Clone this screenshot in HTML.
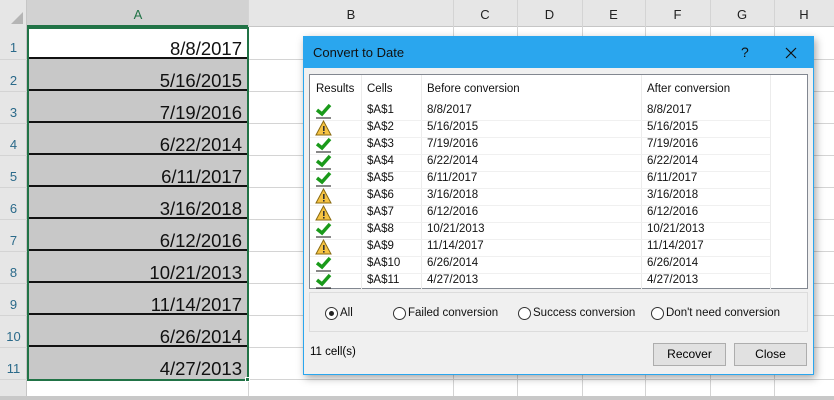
<!DOCTYPE html>
<html><head><meta charset="utf-8"><style>
*{margin:0;padding:0;box-sizing:border-box}
body{width:834px;height:400px;overflow:hidden;background:#fff;font-family:"Liberation Sans",sans-serif;position:relative}
.abs{position:absolute}
.hdr{background:#e6e6e6}
.vl{position:absolute;top:0;width:1px;height:396px;background:#d4d4d4}
.hl{position:absolute;left:0;height:1px;width:834px;background:#d4d4d4}
.colh{position:absolute;top:0;height:27px;line-height:30px;text-align:center;font-size:13px;color:#222}
.rown{position:absolute;left:0;width:27px;text-align:center;font-size:13px;color:#2b6a8a}
.cell{position:absolute;left:29px;width:218px;height:32px;overflow:hidden;background:#c8c8c8;border-bottom:2px solid #111;text-align:right;padding-right:5px;font-size:18.5px;line-height:44px;color:#111}
.dlg{position:absolute;left:303px;top:36px;width:511px;height:339px;background:#f0f0f0;border:1px solid #2aa6ee;box-shadow:2px 3px 8px rgba(0,0,0,.35)}
.tb{position:absolute;left:0;top:0;width:509px;height:31px;background:#2aa6ee;font-size:13px;line-height:31px;padding-left:9px;color:#111}
.list{position:absolute;left:5px;top:37px;width:499px;height:215px;background:#fff;border:1px solid #828790}
.r{position:absolute;font-size:11.5px;color:#111;white-space:nowrap}
.rl{position:absolute;left:0;width:460px;height:1px;background:#f0f0f0}
.cs{position:absolute;top:0;width:1px;height:215px;background:#ececec}
.btn{position:absolute;top:306px;height:23px;background:#e1e1e1;border:1px solid #adadad;font-size:12px;text-align:center;line-height:21px}
.rad{position:absolute;top:270px;width:13px;height:13px;border:1px solid #333;border-radius:50%;background:#fff}
.rt{position:absolute;top:270px;font-size:11.5px;color:#111}
</style></head><body>
<div class="abs hdr" style="left:0;top:0;width:834px;height:27px;border-bottom:1px solid #c6c6c6"></div>
<div class="abs hdr" style="left:0;top:0;width:27px;height:396px;border-right:1px solid #c6c6c6"></div>
<div class="abs" style="left:27px;top:0;width:222px;height:27px;background:#d2d2d2;border-bottom:2px solid #217346"></div>
<svg class="abs" style="left:10px;top:12px" width="14" height="13"><polygon points="13,0 13,12 1,12" fill="#b5b5b5"/></svg>
<div class="vl" style="left:248px"></div><div class="vl" style="left:453px"></div><div class="vl" style="left:517px"></div><div class="vl" style="left:582px"></div><div class="vl" style="left:645px"></div><div class="vl" style="left:710px"></div><div class="vl" style="left:774px"></div>
<div class="hl" style="top:59px"></div><div class="hl" style="top:91px"></div><div class="hl" style="top:123px"></div><div class="hl" style="top:155px"></div><div class="hl" style="top:187px"></div><div class="hl" style="top:219px"></div><div class="hl" style="top:251px"></div><div class="hl" style="top:283px"></div><div class="hl" style="top:315px"></div><div class="hl" style="top:347px"></div><div class="hl" style="top:379px"></div>
<div class="colh" style="left:27px;width:222px;color:#217346">A</div>
<div class="colh" style="left:249px;width:204px">B</div>
<div class="colh" style="left:453px;width:64px">C</div>
<div class="colh" style="left:517px;width:65px">D</div>
<div class="colh" style="left:582px;width:63px">E</div>
<div class="colh" style="left:645px;width:65px">F</div>
<div class="colh" style="left:710px;width:64px">G</div>
<div class="colh" style="left:774px;width:60px">H</div>
<div class="rown" style="top:40px">1</div><div class="rown" style="top:73px">2</div><div class="rown" style="top:105px">3</div><div class="rown" style="top:137px">4</div><div class="rown" style="top:169px">5</div><div class="rown" style="top:201px">6</div><div class="rown" style="top:233px">7</div><div class="rown" style="top:265px">8</div><div class="rown" style="top:297px">9</div><div class="rown" style="top:329px">10</div><div class="rown" style="top:361px">11</div>
<div class="cell" style="top:27px;background:#fff">8/8/2017</div>
<div class="cell" style="top:59px">5/16/2015</div>
<div class="cell" style="top:91px">7/19/2016</div>
<div class="cell" style="top:123px">6/22/2014</div>
<div class="cell" style="top:155px">6/11/2017</div>
<div class="cell" style="top:187px">3/16/2018</div>
<div class="cell" style="top:219px">6/12/2016</div>
<div class="cell" style="top:251px">10/21/2013</div>
<div class="cell" style="top:283px">11/14/2017</div>
<div class="cell" style="top:315px">6/26/2014</div>
<div class="cell" style="top:347px;border-bottom:none">4/27/2013</div>
<div class="abs" style="left:27px;top:27px;width:222px;height:354px;border:2px solid #217346"></div>
<div class="abs" style="left:245px;top:377px;width:5px;height:5px;background:#217346;border:1px solid #fff"></div>
<div class="abs" style="left:0;top:396px;width:834px;height:4px;background:#c8c8c8"></div>

<div class="dlg">
<div class="tb">Convert to Date<span style="position:absolute;left:437px;font-size:14px">?</span><svg style="position:absolute;left:481px;top:10px" width="12" height="12"><path d="M1 1L11 11M11 1L1 11" stroke="#111" stroke-width="1.2"/></svg></div>
<div class="list">
<div class="cs" style="left:51px"></div><div class="cs" style="left:111px"></div><div class="cs" style="left:331px"></div><div class="cs" style="left:460px"></div>
<div class="r" style="left:6px;top:8px">Results</div><div class="r" style="left:57px;top:8px">Cells</div><div class="r" style="left:117px;top:8px">Before conversion</div><div class="r" style="left:337px;top:8px">After conversion</div>
<div id="rows"></div>
</div>
<div class="abs" style="left:5px;top:255px;width:499px;height:40px;border:1px solid #dcdcdc"></div>
<div class="rad" style="left:21px"><div style="position:absolute;left:3px;top:3px;width:5px;height:5px;border-radius:50%;background:#222"></div></div><div class="rt" style="left:36px">All</div>
<div class="rad" style="left:89px"></div><div class="rt" style="left:104px">Failed conversion</div>
<div class="rad" style="left:214px"></div><div class="rt" style="left:229px">Success conversion</div>
<div class="rad" style="left:347px"></div><div class="rt" style="left:362px">Don't need conversion</div>
<div class="abs" style="left:6px;top:309px;font-size:11.5px">11 cell(s)</div>
<div class="btn" style="left:349px;width:73px">Recover</div>
<div class="btn" style="left:430px;width:73px">Close</div>
</div>
<script>
var d=[[1,'$A$1','8/8/2017'],[0,'$A$2','5/16/2015'],[1,'$A$3','7/19/2016'],[1,'$A$4','6/22/2014'],[1,'$A$5','6/11/2017'],[0,'$A$6','3/16/2018'],[0,'$A$7','6/12/2016'],[1,'$A$8','10/21/2013'],[0,'$A$9','11/14/2017'],[1,'$A$10','6/26/2014'],[1,'$A$11','4/27/2013']];
var h='';
var ck='<svg width="18" height="16" style="position:absolute;left:5px;top:0"><path d="M2 7 L7 11 L15 2" stroke="#1a9a1a" stroke-width="3.5" fill="none"/><line x1="1" y1="15" x2="16" y2="15" stroke="#111"/></svg>';
var wr='<svg width="18" height="16" style="position:absolute;left:5px;top:0"><polygon points="8.5,1 16,15 1,15" fill="#f6c343" stroke="#8a6a10"/><rect x="8" y="6" width="1.6" height="5" fill="#333"/><rect x="8" y="12" width="1.6" height="1.6" fill="#333"/></svg>';
d.forEach(function(r,i){var t=28+i*17;h+='<div style="position:absolute;left:0;top:'+t+'px;width:460px;height:17px">'+(r[0]?ck:wr)+'<div class="r" style="left:57px;top:1px">'+r[1]+'</div><div class="r" style="left:117px;top:1px">'+r[2]+'</div><div class="r" style="left:337px;top:1px">'+r[2]+'</div></div><div class="rl" style="top:'+(t+17)+'px"></div>';});
document.getElementById('rows').innerHTML=h;
</script>
</body></html>
